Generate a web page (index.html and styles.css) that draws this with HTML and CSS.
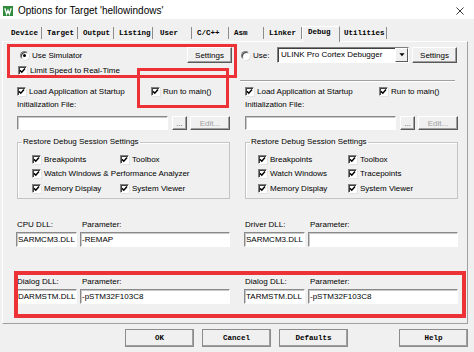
FILE: index.html
```html
<!DOCTYPE html>
<html lang="en">
<head>
    <meta charset="UTF-8">
    <meta name="viewport" content="width=device-width, initial-scale=1.0">
    <title>Options for Target 'hellowindows'</title>
    <link rel="stylesheet" href="styles.css">
</head>
<body>
<div class="window">
    <!-- Title bar -->
    <div class="titlebar">
        <svg class="app-icon" viewBox="0 0 10 10">
            <rect width="10" height="10" fill="#2f8a3c"/>
            <path d="M1.8 2.2 L3.6 8 L5 4.4 L6.4 8 L8.2 2.2" fill="none" stroke="#fff" stroke-width="1.3"/>
        </svg>
        <span class="title">Options for Target 'hellowindows'</span>
        <svg class="close" viewBox="0 0 8 8">
            <path d="M0.5 0.5 L7.5 7.5 M7.5 0.5 L0.5 7.5" stroke="#222" stroke-width="0.9"/>
        </svg>
    </div>

    <!-- Tabs -->
    <div class="tabs">
        <span class="tab">Device</span>
        <span class="tab">Target</span>
        <span class="tab">Output</span>
        <span class="tab">Listing</span>
        <span class="tab">User</span>
        <span class="tab">C/C++</span>
        <span class="tab">Asm</span>
        <span class="tab">Linker</span>
        <span class="tab active">Debug</span>
        <span class="tab">Utilities</span>
    </div>

    <!-- Debug page -->
    <div class="panel">
        <!-- Simulator side -->
        <div class="col">
            <div class="target">
                <div class="row-top">
                    <label class="opt opt-sim"><span class="radio on"></span>Use Simulator</label>
                    <button class="btn btn-settings">Settings</button>
                </div>
                <label class="opt opt-limit"><span class="check"><svg viewBox="0 0 7 7"><path d="M1 3.4 L2.8 5.2 L6 1.6"/></svg></span>Limit Speed to Real-Time</label>
            </div>
            <div class="row">
                <label class="opt opt-load"><span class="check"><svg viewBox="0 0 7 7"><path d="M1 3.4 L2.8 5.2 L6 1.6"/></svg></span>Load Application at Startup</label>
                <label class="opt"><span class="check"><svg viewBox="0 0 7 7"><path d="M1 3.4 L2.8 5.2 L6 1.6"/></svg></span>Run to main()</label>
            </div>
            <div class="label">Initialization File:</div>
            <div class="file-row">
                <span class="field file"></span>
                <button class="btn btn-dots">...</button>
                <button class="btn btn-edit" disabled>Edit...</button>
            </div>
            <fieldset class="group">
                <legend>Restore Debug Session Settings</legend>
                <div class="group-grid">
                    <label class="opt"><span class="check"><svg viewBox="0 0 7 7"><path d="M1 3.4 L2.8 5.2 L6 1.6"/></svg></span>Breakpoints</label>
                    <label class="opt"><span class="check"><svg viewBox="0 0 7 7"><path d="M1 3.4 L2.8 5.2 L6 1.6"/></svg></span>Toolbox</label>
                    <label class="opt wide"><span class="check"><svg viewBox="0 0 7 7"><path d="M1 3.4 L2.8 5.2 L6 1.6"/></svg></span>Watch Windows &amp; Performance Analyzer</label>
                    <label class="opt"><span class="check"><svg viewBox="0 0 7 7"><path d="M1 3.4 L2.8 5.2 L6 1.6"/></svg></span>Memory Display</label>
                    <label class="opt"><span class="check"><svg viewBox="0 0 7 7"><path d="M1 3.4 L2.8 5.2 L6 1.6"/></svg></span>System Viewer</label>
                </div>
            </fieldset>
            <div class="dll dll-first">
                <div class="dll-name">
                    <div class="label">CPU DLL:</div>
                    <div class="field">SARMCM3.DLL</div>
                </div>
                <div class="dll-param">
                    <div class="label">Parameter:</div>
                    <div class="field">-REMAP</div>
                </div>
            </div>
            <div class="dll dll-second">
                <div class="dll-name">
                    <div class="label">Dialog DLL:</div>
                    <div class="field">DARMSTM.DLL</div>
                </div>
                <div class="dll-param">
                    <div class="label">Parameter:</div>
                    <div class="field">-pSTM32F103C8</div>
                </div>
            </div>
        </div>

        <!-- Debugger side -->
        <div class="col">
            <div class="target">
                <div class="row-top">
                    <label class="opt opt-use"><span class="radio"></span>Use:</label>
                    <div class="select">
                        <span class="select-text">ULINK Pro Cortex Debugger</span>
                        <span class="select-arrow"><svg viewBox="0 0 7 4"><path d="M0.5 0 L6.5 0 L3.5 3.5 Z" fill="#000"/></svg></span>
                    </div>
                    <button class="btn btn-settings">Settings</button>
                </div>
                <div class="sep"></div>
            </div>
            <div class="row">
                <label class="opt opt-load"><span class="check"><svg viewBox="0 0 7 7"><path d="M1 3.4 L2.8 5.2 L6 1.6"/></svg></span>Load Application at Startup</label>
                <label class="opt"><span class="check"><svg viewBox="0 0 7 7"><path d="M1 3.4 L2.8 5.2 L6 1.6"/></svg></span>Run to main()</label>
            </div>
            <div class="label">Initialization File:</div>
            <div class="file-row">
                <span class="field file"></span>
                <button class="btn btn-dots">...</button>
                <button class="btn btn-edit" disabled>Edit...</button>
            </div>
            <fieldset class="group">
                <legend>Restore Debug Session Settings</legend>
                <div class="group-grid group-grid-right">
                    <label class="opt"><span class="check"><svg viewBox="0 0 7 7"><path d="M1 3.4 L2.8 5.2 L6 1.6"/></svg></span>Breakpoints</label>
                    <label class="opt"><span class="check"><svg viewBox="0 0 7 7"><path d="M1 3.4 L2.8 5.2 L6 1.6"/></svg></span>Toolbox</label>
                    <label class="opt"><span class="check"><svg viewBox="0 0 7 7"><path d="M1 3.4 L2.8 5.2 L6 1.6"/></svg></span>Watch Windows</label>
                    <label class="opt"><span class="check"><svg viewBox="0 0 7 7"><path d="M1 3.4 L2.8 5.2 L6 1.6"/></svg></span>Tracepoints</label>
                    <label class="opt"><span class="check"><svg viewBox="0 0 7 7"><path d="M1 3.4 L2.8 5.2 L6 1.6"/></svg></span>Memory Display</label>
                    <label class="opt"><span class="check"><svg viewBox="0 0 7 7"><path d="M1 3.4 L2.8 5.2 L6 1.6"/></svg></span>System Viewer</label>
                </div>
            </fieldset>
            <div class="dll dll-first">
                <div class="dll-name">
                    <div class="label">Driver DLL:</div>
                    <div class="field">SARMCM3.DLL</div>
                </div>
                <div class="dll-param">
                    <div class="label">Parameter:</div>
                    <div class="field"></div>
                </div>
            </div>
            <div class="dll dll-second">
                <div class="dll-name">
                    <div class="label">Dialog DLL:</div>
                    <div class="field">TARMSTM.DLL</div>
                </div>
                <div class="dll-param">
                    <div class="label">Parameter:</div>
                    <div class="field">-pSTM32F103C8</div>
                </div>
            </div>
        </div>
    </div>

    <!-- Dialog buttons -->
    <div class="buttons">
        <button class="btn">OK</button>
        <button class="btn">Cancel</button>
        <button class="btn">Defaults</button>
        <button class="btn btn-help">Help</button>
    </div>

    <!-- Red highlight boxes drawn over the dialog -->
    <div class="mark mark-sim"></div>
    <div class="mark mark-main"></div>
    <div class="mark mark-dialog"></div>
</div>
</body>
</html>
```

FILE: styles.css
```css
* {
    box-sizing: border-box;
}

body {
    margin: 0;
    background-color: #f0f0f0;
    font-family: "Liberation Sans", Arial, sans-serif;
    font-size: 8px;
    color: #000;
}

.window {
    position: relative;
    width: 474px;
    height: 352px;
    overflow: hidden;
    background-color: #f0f0f0;
}

/* Title bar */
.titlebar {
    height: 19px;
    display: flex;
    align-items: center;
    padding: 2px 10px 0 3px;
    background-color: #fff;
}

.app-icon {
    width: 10px;
    height: 10px;
    margin-right: 5px;
}

.title {
    flex: 1;
    font-size: 10px;
}

.close {
    width: 8px;
    height: 8px;
}

/* Tabs */
.tabs {
    height: 22px;
    display: flex;
    align-items: flex-end;
    padding-left: 2px;
    font-family: "Liberation Mono", "Courier New", monospace;
    font-weight: bold;
    font-size: 7.5px;
}

.tab {
    height: 12px;
    margin-bottom: 2px;
    padding-left: 5px;
    line-height: 12px;
    white-space: nowrap;
    border-right: 1px solid #8c8c8c;
}

.tab:nth-child(1) { width: 40px; padding-left: 9px; }
.tab:nth-child(2) { width: 36px; }
.tab:nth-child(3) { width: 36px; }
.tab:nth-child(4) { width: 39px; }
.tab:nth-child(5) { width: 39px; padding-left: 7px; }
.tab:nth-child(6) { width: 37px; }
.tab:nth-child(7) { width: 35px; }
.tab:nth-child(8) { width: 38px; }
.tab:nth-child(9) { width: 38px; }
.tab:nth-child(10) { width: 47px; padding-left: 4px; }

.tab.active {
    height: 16px;
    margin-bottom: -1px;
    line-height: 11px;
    background-color: #f0f0f0;
    border-top: 1px solid #fff;
    border-left: 1px solid #fff;
}

/* Tab page */
.panel {
    margin-left: 2px;
    width: 466px;
    height: 283px;
    padding: 5px 0 0 13px;
    border: 1px solid;
    border-color: #fff #a0a0a0 #a0a0a0 #fff;
    display: grid;
    grid-template-columns: 216px 216px;
    column-gap: 12px;
    align-items: start;
}

.target {
    height: 37px;
}

.row-top {
    height: 16px;
    display: flex;
    align-items: center;
}

.opt {
    height: 14px;
    display: flex;
    align-items: center;
    gap: 3px;
    white-space: nowrap;
}

.opt-sim {
    flex: 1;
    padding-left: 4px;
}

.opt-limit {
    padding-left: 2px;
}

.opt-use {
    width: 36px;
    margin-left: -3px;
}

.row {
    height: 14px;
    display: flex;
}

.opt-load {
    width: 135px;
    padding-left: 1px;
}

.label {
    height: 14px;
    line-height: 14px;
    padding-left: 1px;
    white-space: nowrap;
}

.sep {
    width: 215px;
    height: 2px;
    margin: 17px 0 0 -4px;
    border-top: 1px solid #a0a0a0;
    border-bottom: 1px solid #fff;
}

/* Checkboxes and radios */
.check,
.radio {
    flex: none;
    width: 9px;
    height: 9px;
    display: flex;
    align-items: center;
    justify-content: center;
    background-color: #fff;
    border: 1px solid;
    border-color: #808080 #fff #fff #808080;
    box-shadow: inset 1px 1px 0 #404040, 1px 1px 0 #e3e3e3;
}

.check svg {
    width: 7px;
    height: 7px;
}

.check path {
    fill: none;
    stroke: #000;
    stroke-width: 1.5;
}

.radio {
    border-radius: 50%;
}

.radio.on::after {
    content: "";
    width: 3px;
    height: 3px;
    border-radius: 50%;
    background-color: #000;
}

/* Buttons */
.btn {
    font: inherit;
    color: #000;
    padding: 0;
    background-color: #f0f0f0;
    border: 1px solid;
    border-color: #fff #5a5a5a #5a5a5a #fff;
    box-shadow: inset -1px -1px 0 #a0a0a0;
}

.btn-settings {
    width: 45px;
    height: 16px;
}

.row-top .select + .btn-settings {
    margin-left: 3px;
}

.select {
    width: 132px;
    height: 16px;
    display: flex;
    background-color: #fff;
    border: 1px solid;
    border-color: #808080 #fff #fff #808080;
    box-shadow: inset 1px 1px 0 #404040;
}

.select-text {
    flex: 1;
    padding-left: 3px;
    line-height: 14px;
    white-space: nowrap;
}

.select-arrow {
    width: 13px;
    display: flex;
    align-items: center;
    justify-content: center;
    background-color: #f0f0f0;
    border: 1px solid;
    border-color: #fff #5a5a5a #5a5a5a #fff;
}

.select-arrow svg {
    width: 6px;
    height: 4px;
}

/* Text fields */
.field {
    background-color: #fff;
    border: 1px solid;
    border-color: #8a8a8a #fff #fff #8a8a8a;
    box-shadow: inset 1px 1px 0 #c8c8c8;
    padding-left: 1px;
    white-space: nowrap;
    overflow: hidden;
}

.file-row {
    height: 14px;
    margin-top: 4px;
    padding: 0 2px 0 1px;
    display: flex;
}

.file-row .file {
    flex: 1;
}

.btn-dots {
    width: 15px;
    margin-left: 4px;
    color: #555;
}

.btn-edit {
    width: 40px;
    margin-left: 3px;
    color: #a0a0a0;
}

/* Restore Debug Session Settings */
.group {
    min-width: 0;
    margin: 7px 2px 0 1px;
    padding: 5px 0 2px 4px;
    border: 1px solid #c4c4c4;
    box-shadow: inset 1px 1px 0 #fff;
}

.group legend {
    padding: 0 1px;
    line-height: 10px;
}

.group-grid {
    display: grid;
    grid-template-columns: 88px auto;
    padding-left: 10px;
}

.group-grid-right {
    grid-template-columns: 90px auto;
    padding-left: 8px;
}

.group-grid .opt {
    height: 14.5px;
}

.group-grid .wide {
    grid-column: 1 / 3;
}

/* DLL rows */
.dll {
    display: flex;
    gap: 3px;
}

.dll-first {
    margin-top: 20px;
}

.dll-second {
    margin-top: 29px;
}

.dll-name {
    width: 61px;
}

.dll-param {
    width: 150px;
}

.dll .label {
    height: 12px;
    line-height: 12px;
}

.dll-param .label {
    padding-left: 2px;
}

.dll .field {
    height: 15px;
    margin-top: 1px;
    line-height: 13px;
}

/* Dialog buttons */
.buttons {
    display: flex;
    gap: 8px;
    margin-top: 5px;
    padding-left: 125px;
}

.buttons .btn {
    width: 69px;
    height: 18px;
    font-family: "Liberation Mono", "Courier New", monospace;
    font-weight: bold;
    font-size: 7.5px;
    border-color: #fff #404040 #404040 #fff;
    outline: 1px solid #8c8c8c;
    outline-offset: -1px;
}

.buttons .btn-help {
    margin-left: 43px;
}

/* Red annotation boxes */
.mark {
    position: absolute;
    border: 3px solid #ec3237;
}

.mark-sim {
    left: 7px;
    top: 44px;
    width: 230px;
    height: 34px;
}

.mark-main {
    left: 137px;
    top: 68px;
    width: 92px;
    height: 40px;
}

.mark-dialog {
    left: 14px;
    top: 271px;
    width: 452px;
    height: 47px;
    border-width: 4px;
}
```
